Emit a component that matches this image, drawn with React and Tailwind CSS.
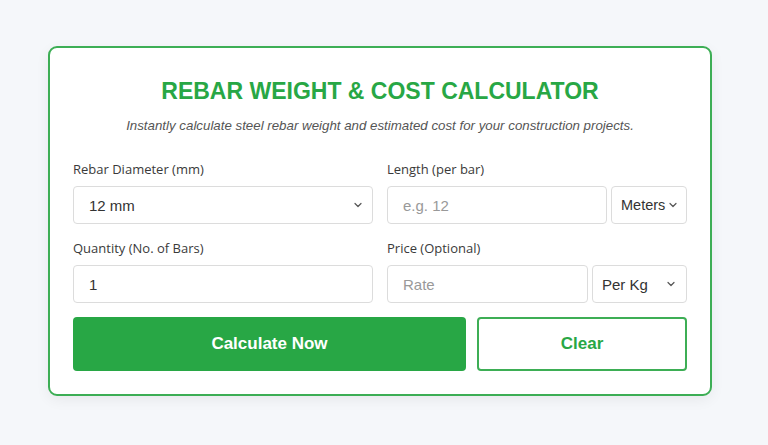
import React, { useState } from 'react';

const Chevron = ({ className = '' }) => (
    <svg className={className} width="8" height="6" viewBox="0 0 8 6" fill="none">
        <path d="M1 1.5 L4 4.5 L7 1.5" stroke="#555" strokeWidth="1.2" strokeLinecap="round" strokeLinejoin="round" />
    </svg>
);

const Label = ({ children }) => (
    <label className="block mb-[8px] text-[13px] leading-[18px] font-medium text-[#3a3a3a]" style={{ fontFamily: '"Open Sans", "Noto Sans", sans-serif' }}>
        {children}
    </label>
);

const SelectBox = ({ value, className = '', textPad = 'pl-[15px]', chevronPad = 'pr-[14px]', textSize = 'text-[15px]' }) => (
    <div className={`h-[38px] border border-[#dcdcdc] rounded-[4px] bg-white flex items-center justify-between ${textPad} ${chevronPad} ${textSize} text-[#333] ${className}`}>
        <span className="pt-[2px]">{value}</span>
        <Chevron />
    </div>
);

const App = () => {
    const [length, setLength] = useState('');
    const [qty, setQty] = useState('1');
    const [rate, setRate] = useState('');

    return (
        <div className="min-h-[445px] w-full bg-[#f5f7fa] pt-[46px] pl-[48px]" style={{ fontFamily: '"Liberation Sans", Arial, sans-serif' }}>
            <div className="w-[664px] bg-white border-2 border-[#3dae55] rounded-[9px] shadow-[0_4px_14px_rgba(0,0,0,0.06)] px-[23px] pt-[28px] pb-[23px]">
                {/* Header */}
                <h1 className="text-center text-[23px] leading-[30px] font-bold text-[#28a745]">
                    REBAR WEIGHT &amp; COST CALCULATOR
                </h1>
                <p className="text-center italic text-[13.3px] leading-[18px] text-[#555] mt-[11px]">
                    Instantly calculate steel rebar weight and estimated cost for your construction projects.
                </p>

                {/* Fields */}
                <div className="grid grid-cols-2 gap-x-[14px] gap-y-[15px] mt-[25px]">
                    <div>
                        <Label>Rebar Diameter (mm)</Label>
                        <SelectBox value="12 mm" chevronPad="pr-[10px]" />
                    </div>
                    <div>
                        <Label>Length (per bar)</Label>
                        <div className="flex gap-[4px]">
                            <input
                                type="text"
                                placeholder="e.g. 12"
                                value={length}
                                onChange={(e) => setLength(e.target.value)}
                                className="w-[220px] h-[38px] border border-[#dcdcdc] rounded-[4px] px-[15px] text-[15px] text-[#333] placeholder-[#999] outline-none"
                            />
                            <SelectBox value="Meters" className="flex-1" textPad="pl-[9px]" chevronPad="pr-[9px]" textSize="text-[14.5px]" />
                        </div>
                    </div>
                    <div>
                        <Label>Quantity (No. of Bars)</Label>
                        <input
                            type="text"
                            value={qty}
                            onChange={(e) => setQty(e.target.value)}
                            className="w-full h-[38px] border border-[#dcdcdc] rounded-[4px] px-[15px] text-[15px] text-[#333] outline-none"
                        />
                    </div>
                    <div>
                        <Label>Price (Optional)</Label>
                        <div className="flex gap-[4px]">
                            <input
                                type="text"
                                placeholder="Rate"
                                value={rate}
                                onChange={(e) => setRate(e.target.value)}
                                className="w-[201px] h-[38px] border border-[#dcdcdc] rounded-[4px] px-[15px] text-[15px] text-[#333] placeholder-[#999] outline-none"
                            />
                            <SelectBox value="Per Kg" className="flex-1" textPad="pl-[9px]" chevronPad="pr-[11px]" />
                        </div>
                    </div>
                </div>

                {/* Actions */}
                <div className="flex gap-[11px] mt-[14px]">
                    <button className="w-[393px] h-[54px] bg-[#28a745] rounded-[4px] text-white text-[17px] font-bold">
                        Calculate Now
                    </button>
                    <button className="flex-1 h-[54px] bg-white border-2 border-[#3dae55] rounded-[4px] text-[#28a745] text-[17px] font-bold">
                        Clear
                    </button>
                </div>
            </div>
        </div>
    );
};

export default App;
